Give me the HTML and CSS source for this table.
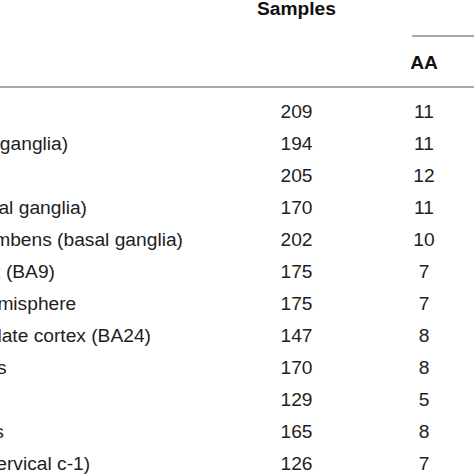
FILE: index.html
```html
<!DOCTYPE html>
<html lang="en">
<head>
<meta charset="utf-8">
<title>Samples table</title>
<link rel="stylesheet" href="styles.css">
</head>
<body>
<div class="table">
  <div class="row head-top">
    <div class="cell label"></div>
    <div class="cell num th">Samples</div>
    <div class="cell gap"></div>
    <div class="cell group"></div>
  </div>
  <div class="row head-sub">
    <div class="cell label"></div>
    <div class="cell num"></div>
    <div class="cell gap"></div>
    <div class="cell aa th">AA</div>
    <div class="cell more"></div>
  </div>
  <div class="body">
    <div class="row"><div class="cell label">Cerebellum</div><div class="cell num">209</div><div class="cell gap"></div><div class="cell aa">11</div></div>
    <div class="row"><div class="cell label"><span class="nudge-left">Caudate (basal ganglia)</span></div><div class="cell num">194</div><div class="cell gap"></div><div class="cell aa">11</div></div>
    <div class="row"><div class="cell label">Cortex</div><div class="cell num">205</div><div class="cell gap"></div><div class="cell aa">12</div></div>
    <div class="row"><div class="cell label">Putamen (basal ganglia)</div><div class="cell num">170</div><div class="cell gap"></div><div class="cell aa">11</div></div>
    <div class="row"><div class="cell label">Nucleus accumbens (basal ganglia)</div><div class="cell num">202</div><div class="cell gap"></div><div class="cell aa">10</div></div>
    <div class="row"><div class="cell label">Frontal Cortex (BA9)</div><div class="cell num">175</div><div class="cell gap"></div><div class="cell aa">7</div></div>
    <div class="row"><div class="cell label">Cerebellar Hemisphere</div><div class="cell num">175</div><div class="cell gap"></div><div class="cell aa">7</div></div>
    <div class="row"><div class="cell label">Anterior cingulate cortex (BA24)</div><div class="cell num">147</div><div class="cell gap"></div><div class="cell aa">8</div></div>
    <div class="row"><div class="cell label"><span class="nudge-right-a">Hypothalamus</span></div><div class="cell num">170</div><div class="cell gap"></div><div class="cell aa">8</div></div>
    <div class="row"><div class="cell label">Amygdala</div><div class="cell num">129</div><div class="cell gap"></div><div class="cell aa">5</div></div>
    <div class="row"><div class="cell label"><span class="nudge-right-b">Hippocampus</span></div><div class="cell num">165</div><div class="cell gap"></div><div class="cell aa">8</div></div>
    <div class="row"><div class="cell label">Spinal cord (cervical c-1)</div><div class="cell num">126</div><div class="cell gap"></div><div class="cell aa">7</div></div>
    <div class="row"><div class="cell label">Substantia nigra</div><div class="cell num">114</div><div class="cell gap"></div><div class="cell aa">6</div></div>
  </div>
</div>
</body>
</html>
```
FILE: styles.css
```css
html, body {
  margin: 0;
  padding: 0;
  width: 474px;
  height: 474px;
  overflow: hidden;
  background: #ffffff;
}

.table {
  margin-left: -121px;
  margin-top: -2px;
  width: 720px;
  font-family: "Liberation Sans", Arial, sans-serif;
  font-size: 19.2px;
  color: #1e1e1e;
}

.row {
  display: grid;
  grid-template-columns: 371px 93px 69px 24px 163px;
  line-height: 32px;
}

.cell {
  white-space: nowrap;
}

.num,
.aa {
  text-align: center;
}

.aa {
  display: flex;
  justify-content: center;
}

.th {
  font-weight: bold;
  color: #111111;
}

.head-top {
  height: 38.5px;
  line-height: 22px;
}

.head-top .group {
  grid-column: 4 / 6;
  border-bottom: 2px solid #a9a9a9;
}

.head-sub {
  line-height: 22px;
  padding-top: 15.85px;
  padding-bottom: 11.65px;
  border-bottom: 2px solid #a9a9a9;
}

.body {
  padding-top: 7.85px;
}

.nudge-left {
  margin-left: -14.6px;
}

.nudge-right-a {
  margin-left: 5px;
}

.nudge-right-b {
  margin-left: 7.6px;
}
```
